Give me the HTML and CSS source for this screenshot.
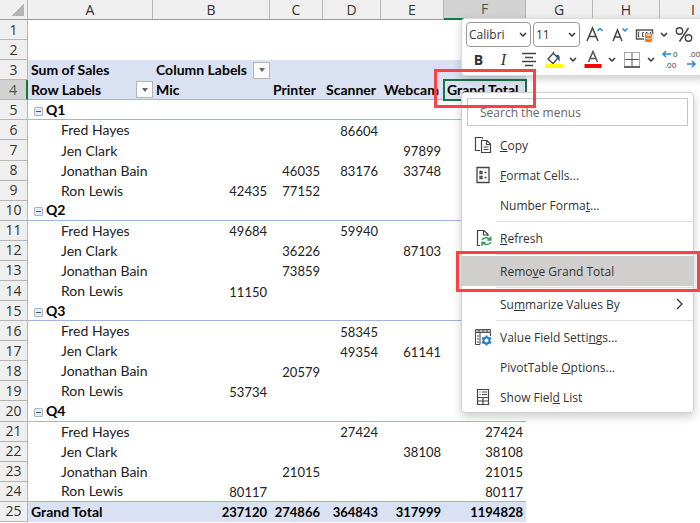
FILE: index.html
```html
<!DOCTYPE html>
<html lang="en">
<head>
    <meta charset="utf-8">
    <title>PivotTable - Sum of Sales</title>
    <link rel="stylesheet" href="styles.css">
</head>
<body>
    <table class="sheet">
        <colgroup>
            <col class="col-num"><col class="col-a"><col class="col-b"><col class="col-c"><col class="col-d"><col class="col-e"><col class="col-f"><col class="col-g"><col class="col-g"><col class="col-g">
        </colgroup>
        <thead>
            <tr><th class="corner"></th><th>A</th><th>B</th><th>C</th><th>D</th><th>E</th><th class="active">F</th><th>G</th><th>H</th><th>I</th></tr>
        </thead>
        <tbody>
            <tr><th>1</th><td></td><td></td><td></td><td></td><td></td><td></td></tr>
            <tr><th>2</th><td></td><td></td><td></td><td></td><td></td><td></td></tr>
            <tr class="head">
                <th>3</th>
                <td class="name">Sum of Sales</td>
                <td class="name"><div class="filter">Column Labels <button type="button" aria-label="Filter columns"></button></div></td>
                <td></td><td></td><td></td><td></td>
            </tr>
            <tr class="head line">
                <th class="active">4</th>
                <td class="name"><div class="filter">Row Labels <button type="button" aria-label="Filter rows"></button></div></td>
                <td class="name">Mic</td><td class="name">Printer</td><td class="name">Scanner</td><td class="name">Webcam</td><td class="name selected">Grand Total</td>
            </tr>
            <tr class="group line"><th>5</th><td><button type="button" class="collapse" aria-label="Collapse"></button>Q1</td><td></td><td></td><td></td><td></td><td></td></tr>
            <tr><th>6</th><td class="person">Fred Hayes</td><td></td><td></td><td>86604</td><td></td><td></td></tr>
            <tr><th>7</th><td class="person">Jen Clark</td><td></td><td></td><td></td><td>97899</td><td></td></tr>
            <tr><th>8</th><td class="person">Jonathan Bain</td><td></td><td>46035</td><td>83176</td><td>33748</td><td></td></tr>
            <tr><th>9</th><td class="person">Ron Lewis</td><td>42435</td><td>77152</td><td></td><td></td><td></td></tr>
            <tr class="group line"><th>10</th><td><button type="button" class="collapse" aria-label="Collapse"></button>Q2</td><td></td><td></td><td></td><td></td><td></td></tr>
            <tr><th>11</th><td class="person">Fred Hayes</td><td>49684</td><td></td><td>59940</td><td></td><td></td></tr>
            <tr><th>12</th><td class="person">Jen Clark</td><td></td><td>36226</td><td></td><td>87103</td><td></td></tr>
            <tr><th>13</th><td class="person">Jonathan Bain</td><td></td><td>73859</td><td></td><td></td><td></td></tr>
            <tr><th>14</th><td class="person">Ron Lewis</td><td>11150</td><td></td><td></td><td></td><td></td></tr>
            <tr class="group line"><th>15</th><td><button type="button" class="collapse" aria-label="Collapse"></button>Q3</td><td></td><td></td><td></td><td></td><td></td></tr>
            <tr><th>16</th><td class="person">Fred Hayes</td><td></td><td></td><td>58345</td><td></td><td></td></tr>
            <tr><th>17</th><td class="person">Jen Clark</td><td></td><td></td><td>49354</td><td>61141</td><td></td></tr>
            <tr><th>18</th><td class="person">Jonathan Bain</td><td></td><td>20579</td><td></td><td></td><td></td></tr>
            <tr><th>19</th><td class="person">Ron Lewis</td><td>53734</td><td></td><td></td><td></td><td></td></tr>
            <tr class="group line"><th>20</th><td><button type="button" class="collapse" aria-label="Collapse"></button>Q4</td><td></td><td></td><td></td><td></td><td></td></tr>
            <tr><th>21</th><td class="person">Fred Hayes</td><td></td><td></td><td>27424</td><td></td><td>27424</td></tr>
            <tr><th>22</th><td class="person">Jen Clark</td><td></td><td></td><td></td><td>38108</td><td>38108</td></tr>
            <tr><th>23</th><td class="person">Jonathan Bain</td><td></td><td>21015</td><td></td><td></td><td>21015</td></tr>
            <tr class="line"><th>24</th><td class="person">Ron Lewis</td><td>80117</td><td></td><td></td><td></td><td>80117</td></tr>
            <tr class="head"><th>25</th><td class="name">Grand Total</td><td>237120</td><td>274866</td><td>364843</td><td>317999</td><td>1194828</td></tr>
        </tbody>
    </table>

    <!-- chevron shared by the toolbar -->
    <svg class="defs" aria-hidden="true">
        <symbol id="chevron" viewBox="0 0 8 6"><path d="M1 1l3 3 3-3" fill="none" stroke="#333" stroke-width="1.5"/></symbol>
    </svg>

    <div class="toolbar">
        <div class="tools">
            <label class="pick font"><select aria-label="Font"><option>Calibri</option></select><svg width="8" height="6"><use href="#chevron"/></svg></label>
            <label class="pick size"><select aria-label="Font size"><option>11</option></select><svg width="8" height="6"><use href="#chevron"/></svg></label>
            <button type="button" aria-label="Increase font size">
                <svg width="20" height="18" fill="none"><path d="M2 15L7.500 2 13 15M4 10.500h7" stroke="#444" stroke-width="1.500"/><path d="M12.500 5l2.500-2.500L17.500 5" stroke="#2b88d8" stroke-width="1.500"/></svg>
            </button>
            <button type="button" aria-label="Decrease font size">
                <svg width="20" height="18" fill="none"><path d="M3 15L7.500 4 12 15M4.500 11h6" stroke="#444" stroke-width="1.500"/><path d="M12.500 2.500L15 5l2.500-2.500" stroke="#2b88d8" stroke-width="1.500"/></svg>
            </button>
            <button type="button" aria-label="Accounting format">
                <svg width="20" height="18" fill="none"><path d="M1.500 4h16v9h-16z" stroke="#555" stroke-width="1.500"/><path d="M4.500 6H3.500v5h1M9 6.500H7.500v4H9M12.500 6.500H11v3M15.500 6v2" stroke="#555"/><path d="M9.500 8.500v6c0 3 8 3 8 0v-6z" fill="#e07b20" stroke="#fff" stroke-width="1"/><ellipse cx="13.500" cy="9" rx="3.500" ry="1.300" fill="#ffe8cf" stroke="#e07b20"/><path d="M10.500 12c1 1.200 5 1.200 6 0" stroke="#ffe8cf"/></svg>
            </button>
            <button type="button" class="more" aria-label="More formats"><svg width="8" height="6"><use href="#chevron"/></svg></button>
            <button type="button" aria-label="Percent style">
                <svg width="20" height="18" fill="none" stroke="#444" stroke-width="1.400"><circle cx="5.500" cy="5" r="3.200"/><circle cx="14.500" cy="12" r="3.200"/><path d="M14.500 2L5.500 15.500"/></svg>
            </button>
        </div>
        <div class="tools">
            <button type="button" class="bold">B</button>
            <button type="button" class="italic">I</button>
            <button type="button" aria-label="Center">
                <svg width="16" height="18" stroke="#444" stroke-width="1.300"><path d="M1 2.500h14M4 6.500h8M1 10.500h14M4 14.500h8"/></svg>
            </button>
            <button type="button" aria-label="Fill color">
                <svg width="18" height="20" fill="none"><path d="M8 3.500L3 9l5 4.500L13 8 8.500 3.500V1.500" stroke="#444" stroke-width="1.300"/><path d="M11 5c4-1 4 3 3.500 7l-2-4z" fill="#1f5c99"/><path d="M0 14h18v4H0z" fill="#ff0"/></svg>
            </button>
            <button type="button" class="more" aria-label="Fill colors"><svg width="8" height="6"><use href="#chevron"/></svg></button>
            <button type="button" aria-label="Font color">
                <svg width="18" height="20" fill="none"><path d="M4.500 12L9 1.500 13.500 12M6 8.500h6" stroke="#555" stroke-width="1.500"/><path d="M0.500 14h17v4h-17z" fill="#f00"/></svg>
            </button>
            <button type="button" class="more" aria-label="Font colors"><svg width="8" height="6"><use href="#chevron"/></svg></button>
            <button type="button" aria-label="Borders">
                <svg width="18" height="18" fill="none" stroke="#555"><path d="M1.500 1.500h15v14" stroke-dasharray="1 1"/><path d="M1.500 1.500v14" stroke-dasharray="1 1"/><path d="M1 16h16" stroke="#333" stroke-width="1.500"/><path d="M9 2v13M2 8.500h14"/></svg>
            </button>
            <button type="button" class="more" aria-label="More borders"><svg width="8" height="6"><use href="#chevron"/></svg></button>
            <button type="button" aria-label="Increase decimal">
                <svg width="20" height="22"><path d="M10 5H2M5 2L2 5l3 3" fill="none" stroke="#2b88d8" stroke-width="1.500"/><text x="12" y="8">0</text><text x="4" y="19">.00</text></svg>
            </button>
            <button type="button" aria-label="Decrease decimal">
                <svg width="20" height="22"><path d="M1 15h8M6 12l3 3-3 3" fill="none" stroke="#2b88d8" stroke-width="1.500"/><text x="3" y="8">.00</text></svg>
            </button>
        </div>
    </div>

    <div class="menu">
        <input type="text" class="search" placeholder="Search the menus" aria-label="Search the menus">
        <button type="button" class="item">
            <svg width="18" height="18" fill="none" stroke="#444" stroke-width="1.200"><path d="M6 14.500H1.500v-13H8l1 1"/><path d="M7.500 4.500h5.500l3.500 3.500v8.500h-9zM12.500 4.500v4h4M9.500 11h5M9.500 13.500h5"/></svg>
            <span><u>C</u>opy</span>
        </button>
        <button type="button" class="item">
            <svg width="18" height="18" fill="none" stroke="#444" stroke-width="1.300"><path d="M3 1.500h12v15H3z"/><path d="M6 5.500h2v2H6zM6 10.500h2v2H6zM10.500 6.500h2M10.500 11.500h2"/></svg>
            <span><u>F</u>ormat Cells...</span>
        </button>
        <button type="button" class="item"><span>Number Forma<u>t</u>...</span></button>
        <hr>
        <button type="button" class="item">
            <svg width="18" height="18" fill="none"><path d="M6 16.500H3.500v-15h6.500l4 4v1.500M9.500 1.500v4.500h4.500" stroke="#444" stroke-width="1.200"/><path d="M8 11c1.500-3 6-3 8.500-.5M16.800 7.500v3.500h-3.500M17 13c-1.500 3-6 3.500-8.500.5M8 17v-3.500h3.500" stroke="#3a9a5c" stroke-width="1.500"/></svg>
            <span><u>R</u>efresh</span>
        </button>
        <hr>
        <button type="button" class="item current"><span>Remo<u>v</u>e Grand Total</span></button>
        <hr>
        <button type="button" class="item">
            <span>Su<u>m</u>marize Values By</span>
            <svg class="arrow" width="8" height="12"><path d="M1 1l5 5-5 5" fill="none" stroke="#333" stroke-width="1.300"/></svg>
        </button>
        <hr>
        <button type="button" class="item">
            <svg width="18" height="18" fill="none"><path d="M1.500 1.500h15v3h-15z" fill="#bbb" stroke="#555"/><path d="M1.500 4.500v12H6v-12M3 8h2M3 11h2M3 14h2M16.500 5v3M4 3h2M8 3h2M12 3h2" stroke="#444"/><circle cx="12.500" cy="12.500" r="3" stroke="#2b7cc4" stroke-width="2"/><path d="M12.500 7.500v2M12.500 15.500v2M8 10l2 1M15 14l2 1M8 15l2-1M15 11l2-1" stroke="#2b7cc4" stroke-width="2"/></svg>
            <span>Value Field Setti<u>n</u>gs...</span>
        </button>
        <button type="button" class="item"><span>PivotTable <u>O</u>ptions...</span></button>
        <button type="button" class="item">
            <svg width="18" height="18" fill="none" stroke="#444" stroke-width="1.200"><path d="M3.500 1.500h11v15h-11zM3.500 9.500h11M3.500 13h11M9 9.500v7M5.500 4h1M8 4h5M5.500 6.500h1M8 6.500h5"/></svg>
            <span>Show Fiel<u>d</u> List</span>
        </button>
    </div>

    <!-- red callouts -->
    <div class="callout callout-total"></div>
    <div class="callout callout-remove"></div>
</body>
</html>
```
FILE: styles.css
```css
body {
    margin: 0;
    min-height: 100vh;
    position: relative;
    overflow: hidden;
    background-color: #fff;
    font-family: Lato, "Liberation Sans", sans-serif;
    font-size: 13px;
    color: #222;
}

button {
    border: none;
    padding: 0;
    background: none;
    font-family: inherit;
    color: inherit;
}

/* worksheet */
.sheet {
    table-layout: fixed;
    width: 727px;
    height: calc(100vh - 1px);
    border-collapse: separate;
    border-spacing: 0;
}

.col-num { width: 28px; }
.col-a { width: 125px; }
.col-b { width: 117px; }
.col-c { width: 53px; }
.col-d { width: 58px; }
.col-e { width: 63px; }
.col-f { width: 82px; }
.col-g { width: 67px; }

.sheet th,
.sheet td {
    box-sizing: border-box;
    height: 20px;
    padding: 1px 3px 0;
    line-height: 18px;
    text-align: right;
    white-space: nowrap;
}

.sheet th {
    padding: 0;
    background-color: #efefef;
    border-right: 1px solid #b5b5b5;
    border-bottom: 1px solid #b5b5b5;
    font-family: "Open Sans", sans-serif;
    font-size: 14px;
    font-weight: normal;
    text-align: center;
    color: #333;
}

.sheet thead th {
    border-bottom-color: #9a9a9a;
}

.sheet th.corner {
    background: linear-gradient(135deg, transparent 50%, #b4b4b4 50%) 12px 4px / 12px 12px no-repeat #efefef;
}

.sheet th.active {
    background-color: #d2d2d2;
    color: #40604c;
}

.sheet thead th.active {
    border-bottom: 2px solid #107c41;
}

.sheet tbody th.active {
    border-right: 2px solid #107c41;
}

.sheet td.name,
.sheet .group td,
.sheet td.person {
    padding-top: 0;
    font-size: 14px;
    text-align: left;
}

.sheet td.person {
    padding-left: 33px;
}

.head td,
.group td {
    font-weight: bold;
    color: #000;
}

.head td {
    background-color: #d9e1f2;
}

.line td {
    border-bottom: 1px solid #9db7e0;
}

.sheet td.selected {
    outline: 2px solid #1a7343;
    outline-offset: -1px;
}

.filter {
    display: flex;
    justify-content: space-between;
    align-items: center;
    margin-right: -3px;
}

.filter button {
    display: flex;
    align-items: center;
    justify-content: center;
    width: 17px;
    height: 17px;
    border: 1px solid #b4b4b4;
    background-color: #fbfbfb;
}

.filter button::after {
    content: "";
    border: 3px solid transparent;
    border-top: 4px solid #666;
    border-bottom: none;
}

.collapse {
    display: inline-flex;
    align-items: center;
    justify-content: center;
    width: 9px;
    height: 9px;
    margin: 0 3px;
    border: 1px solid #a9b4c6;
    border-radius: 1px;
    background-color: #e6ecf5;
    vertical-align: middle;
}

.collapse::after {
    content: "";
    width: 5px;
    height: 1px;
    background-color: #44546a;
}

.defs {
    position: absolute;
    width: 0;
    height: 0;
}

/* mini toolbar */
.toolbar {
    position: absolute;
    left: 461px;
    top: 18px;
    box-sizing: border-box;
    width: 270px;
    padding: 3px 4px;
    border: 1px solid #dcdcdc;
    border-radius: 4px;
    background-color: #fff;
    box-shadow: 0 3px 8px rgba(0, 0, 0, 0.2);
}

.tools {
    display: flex;
    align-items: center;
    height: 25px;
}

.tools button {
    display: flex;
    flex: none;
    align-items: center;
    justify-content: center;
    width: 25px;
    height: 24px;
    color: #333;
}

.tools button.more {
    width: 14px;
}

.tools text {
    font-family: "Open Sans", sans-serif;
    font-size: 8px;
    fill: #444;
}

.tools .bold {
    font-family: "Open Sans", sans-serif;
    font-size: 14px;
    font-weight: bold;
}

.tools .italic {
    font-family: "Liberation Serif", serif;
    font-size: 16px;
    font-style: italic;
}

.pick {
    display: flex;
    flex: none;
    align-items: center;
    box-sizing: border-box;
    height: 25px;
    margin-right: 2px;
    padding: 0 3px 0 2px;
    border: 1px solid #999;
    border-radius: 4px;
}

.pick.font { width: 65px; }
.pick.size { width: 47px; }

.pick select {
    appearance: none;
    flex: 1;
    min-width: 0;
    padding: 0;
    border: none;
    background: none;
    font-family: "Open Sans", sans-serif;
    font-size: 12px;
    color: #333;
}

/* context menu */
.menu {
    position: absolute;
    left: 461px;
    top: 92px;
    box-sizing: border-box;
    width: 233px;
    padding-top: 5px;
    border: 1px solid #cfcfcf;
    border-radius: 4px;
    background-color: #fff;
    box-shadow: 0 4px 10px rgba(0, 0, 0, 0.2);
    font-family: "Open Sans", sans-serif;
    font-size: 12px;
    color: #333;
}

.search {
    display: block;
    box-sizing: border-box;
    width: calc(100% - 10px);
    height: 28px;
    margin: 0 5px 4px;
    padding: 0 12px;
    border: 1px solid #c4c4c4;
    font-family: inherit;
    font-size: 12px;
}

.search::placeholder {
    color: #666;
}

.item {
    display: grid;
    grid-template-columns: 18px 1fr auto;
    column-gap: 8px;
    align-items: center;
    width: 100%;
    height: 30px;
    padding: 0 9px 0 12px;
    font-size: 12px;
    text-align: left;
}

.item span {
    grid-column: 2;
}

.item.current {
    background-color: #d0cfce;
}

.menu hr {
    height: 1px;
    margin: 1px 0 1px 34px;
    border: none;
    background-color: #dedede;
}

.callout {
    position: absolute;
    box-sizing: border-box;
    border: 3px solid #fa4245;
}

.callout-total {
    left: 434px;
    top: 69px;
    width: 102px;
    height: 39px;
}

.callout-remove {
    left: 456px;
    top: 251px;
    width: 244px;
    height: 41px;
}
```
